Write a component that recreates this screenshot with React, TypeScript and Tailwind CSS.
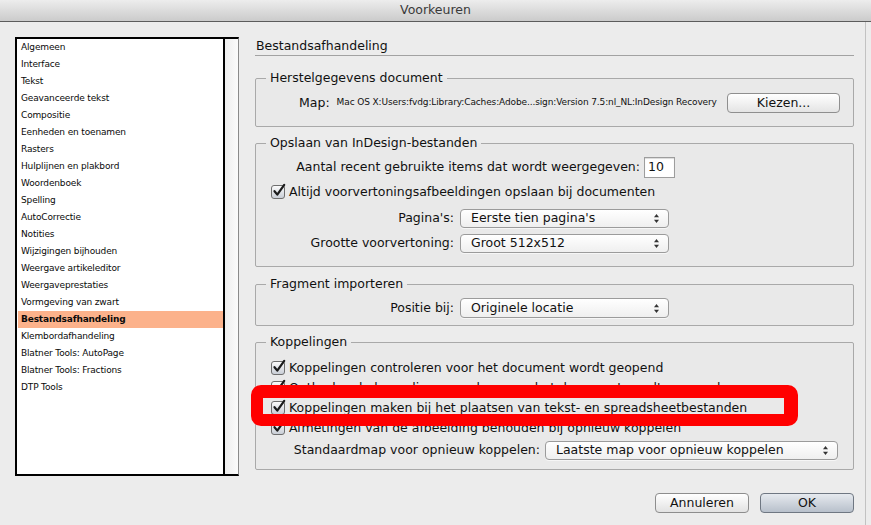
import React from 'react'

const font = { fontFamily: '"DejaVu Sans", "Liberation Sans", sans-serif' }

const categories = [
  'Algemeen',
  'Interface',
  'Tekst',
  'Geavanceerde tekst',
  'Compositie',
  'Eenheden en toenamen',
  'Rasters',
  'Hulplijnen en plakbord',
  'Woordenboek',
  'Spelling',
  'AutoCorrectie',
  'Notities',
  'Wijzigingen bijhouden',
  'Weergave artikeleditor',
  'Weergaveprestaties',
  'Vormgeving van zwart',
  'Bestandsafhandeling',
  'Klembordafhandeling',
  'Blatner Tools: AutoPage',
  'Blatner Tools: Fractions',
  'DTP Tools',
]

function Checkbox() {
  return (
    <span className="relative inline-block w-[14px] h-[14px] shrink-0 rounded-[3px] border border-[#6e6e6e] bg-gradient-to-b from-[#fbfbfb] to-[#c9ced6]">
      <svg className="absolute -left-[1px] -top-[3px]" width="16" height="16" viewBox="0 0 16 16">
        <path d="M3.5 8.2 L6.3 11.6 L13.2 1.8" fill="none" stroke="#1b1b1b" strokeWidth="2.2" strokeLinecap="round" strokeLinejoin="round" />
      </svg>
    </span>
  )
}

function Select({ value, width }: { value: string; width: string }) {
  return (
    <div className={`${width} h-full flex items-center justify-between rounded-[4px] border border-[#9b9b9b] bg-gradient-to-b from-white to-[#efefef] pl-[10px] pr-[8px] shadow-[0_1px_0_rgba(255,255,255,0.6)]`}>
      <span className="text-[12.5px] text-[#111]">{value}</span>
      <svg width="7" height="11" viewBox="0 0 7 11">
        <path d="M3.5 1 L6 4.2 L1 4.2 Z" fill="#333" />
        <path d="M3.5 10 L6 6.8 L1 6.8 Z" fill="#333" />
      </svg>
    </div>
  )
}

function Group({ title, className, children }: { title: string; className?: string; children: React.ReactNode }) {
  return (
    <fieldset className={`border border-[#a9a9a9] rounded-[2px] bg-[#e9e9e9] ${className ?? ''}`}>
      <legend className="ml-[10px] px-[4px] text-[12.5px] leading-[16px] text-[#111]">{title}</legend>
      {children}
    </fieldset>
  )
}

function CheckRow({ label }: { label: string }) {
  return (
    <div className="h-[20px] flex items-center gap-[4px] ml-[15px] text-[12.5px] text-[#111] whitespace-nowrap">
      <Checkbox />
      <span>{label}</span>
    </div>
  )
}

export default function App() {
  return (
    <div className="relative w-[871px] h-[525px] overflow-hidden bg-[#ececec]" style={font}>
      {/* Title bar */}
      <div className="h-[22px] flex items-center justify-center bg-gradient-to-b from-[#ededed] to-[#cbcbcb] border-b border-[#5c5c5c]">
        <span className="text-[12.5px] text-[#3a3a3a]">Voorkeuren</span>
      </div>

      <div className="flex w-[866px] h-[503px] border-r border-[#c2c2c2] pl-[15px] pt-[15px]">
        {/* Category list */}
        <div className="w-[224px] h-[439px] flex border-y-2 border-l-2 border-black border-r border-r-[#8a8a8a]">
          <div className="flex-1 bg-white">
            {categories.map((c) => (
              <div
                key={c}
                className={`h-[17px] ml-[1px] flex items-center pl-[3px] text-[9px] tracking-[-0.15px] text-[#0a0a0a] ${
                  c === 'Bestandsafhandeling' ? 'bg-[#fcb28b] font-bold' : ''
                }`}
              >
                {c}
              </div>
            ))}
          </div>
          <div className="w-[2px] bg-black" />
          <div className="w-[13px] bg-gradient-to-r from-[#eeeeee] to-[#fbfbfb]" />
        </div>

        {/* Settings panel */}
        <div className="ml-[16px] w-[599px] flex flex-col">
          <div className="h-[19px] pl-[1px] border-b border-[#a2a2a2] text-[12.5px] leading-[17px] text-[#111]">
            Bestandsafhandeling
          </div>

          <Group title="Herstelgegevens document" className="mt-[14px] pb-[13px]">
            <div className="mt-[7px] h-[20px] flex items-center">
              <span className="ml-[43px] text-[12.5px] text-[#111]">Map:</span>
              <span className="ml-[7px] text-[9px] tracking-[-0.12px] text-[#111] whitespace-nowrap">
                Mac OS X:Users:fvdg:Library:Caches:Adobe...sign:Version 7.5:nl_NL:InDesign Recovery
              </span>
              <button className="ml-auto mr-[13px] w-[113px] h-[20px] rounded-[4px] border border-[#8f8f8f] bg-gradient-to-b from-white to-[#e4e4e4] text-[12.5px] text-[#111]">
                Kiezen...
              </button>
            </div>
          </Group>

          <Group title="Opslaan van InDesign-bestanden" className="mt-[8px] pb-[13px]">
            <div className="mt-[6px] h-[21px] w-[419px] flex items-center justify-end gap-[4px]">
              <span className="text-[12.5px] text-[#111] whitespace-nowrap">Aantal recent gebruikte items dat wordt weergegeven:</span>
              <div className="w-[31px] h-[21px] flex items-center pl-[3px] bg-white border border-[#9d9d9d] shadow-[inset_0_1px_1px_rgba(0,0,0,0.15)] text-[12.5px] text-[#111]">
                10
              </div>
            </div>
            <div className="mt-[6px] h-[16px] flex items-center gap-[4px] ml-[15px] text-[12.5px] text-[#111] whitespace-nowrap">
              <Checkbox />
              <span>Altijd voorvertoningsafbeeldingen opslaan bij documenten</span>
            </div>
            <div className="mt-[9px] h-[19px] w-[413px] flex items-center justify-end gap-[6px]">
              <span className="text-[12.5px] text-[#111]">Pagina's:</span>
              <Select value="Eerste tien pagina's" width="w-[209px]" />
            </div>
            <div className="mt-[6px] h-[19px] w-[413px] flex items-center justify-end gap-[6px]">
              <span className="text-[12.5px] text-[#111]">Grootte voorvertoning:</span>
              <Select value="Groot 512x512" width="w-[209px]" />
            </div>
          </Group>

          <Group title="Fragment importeren" className="mt-[9px] pb-[7px]">
            <div className="mt-[6px] h-[20px] w-[413px] flex items-center justify-end gap-[6px]">
              <span className="text-[12.5px] text-[#111]">Positie bij:</span>
              <Select value="Originele locatie" width="w-[209px]" />
            </div>
          </Group>

          <Group title="Koppelingen" className="mt-[8px] pb-[9px]">
            <div className="mt-[8px]">
              <CheckRow label="Koppelingen controleren voor het document wordt geopend" />
              <CheckRow label="Ontbrekende koppelingen zoeken voor het document wordt geopend" />
              <CheckRow label="Koppelingen maken bij het plaatsen van tekst- en spreadsheetbestanden" />
              <CheckRow label="Afmetingen van de afbeelding behouden bij opnieuw koppelen" />
            </div>
            <div className="mt-[3px] h-[19px] w-[582px] flex items-center justify-end gap-[5px]">
              <span className="text-[12.5px] text-[#111] whitespace-nowrap">Standaardmap voor opnieuw koppelen:</span>
              <Select value="Laatste map voor opnieuw koppelen" width="w-[293px]" />
            </div>
          </Group>

          <div className="mt-[23px] flex justify-end gap-[11px]">
            <button className="w-[94px] h-[20px] rounded-[4px] border border-[#8d8d8d] bg-gradient-to-b from-white to-[#e2e2e2] text-[12.5px] text-[#111]">
              Annuleren
            </button>
            <button className="w-[94px] h-[20px] rounded-[4px] border border-[#6f7782] bg-gradient-to-b from-[#e6eaef] to-[#b8c0cb] text-[12.5px] text-[#111]">
              OK
            </button>
          </div>
        </div>
      </div>

      {/* Red annotation frame */}
      <div className="absolute left-[251px] top-[385px] w-[547px] h-[41px] rounded-[10px] border-[12px] border-t-[13px] border-r-[14px] border-[#ff0000]" />
    </div>
  )
}
